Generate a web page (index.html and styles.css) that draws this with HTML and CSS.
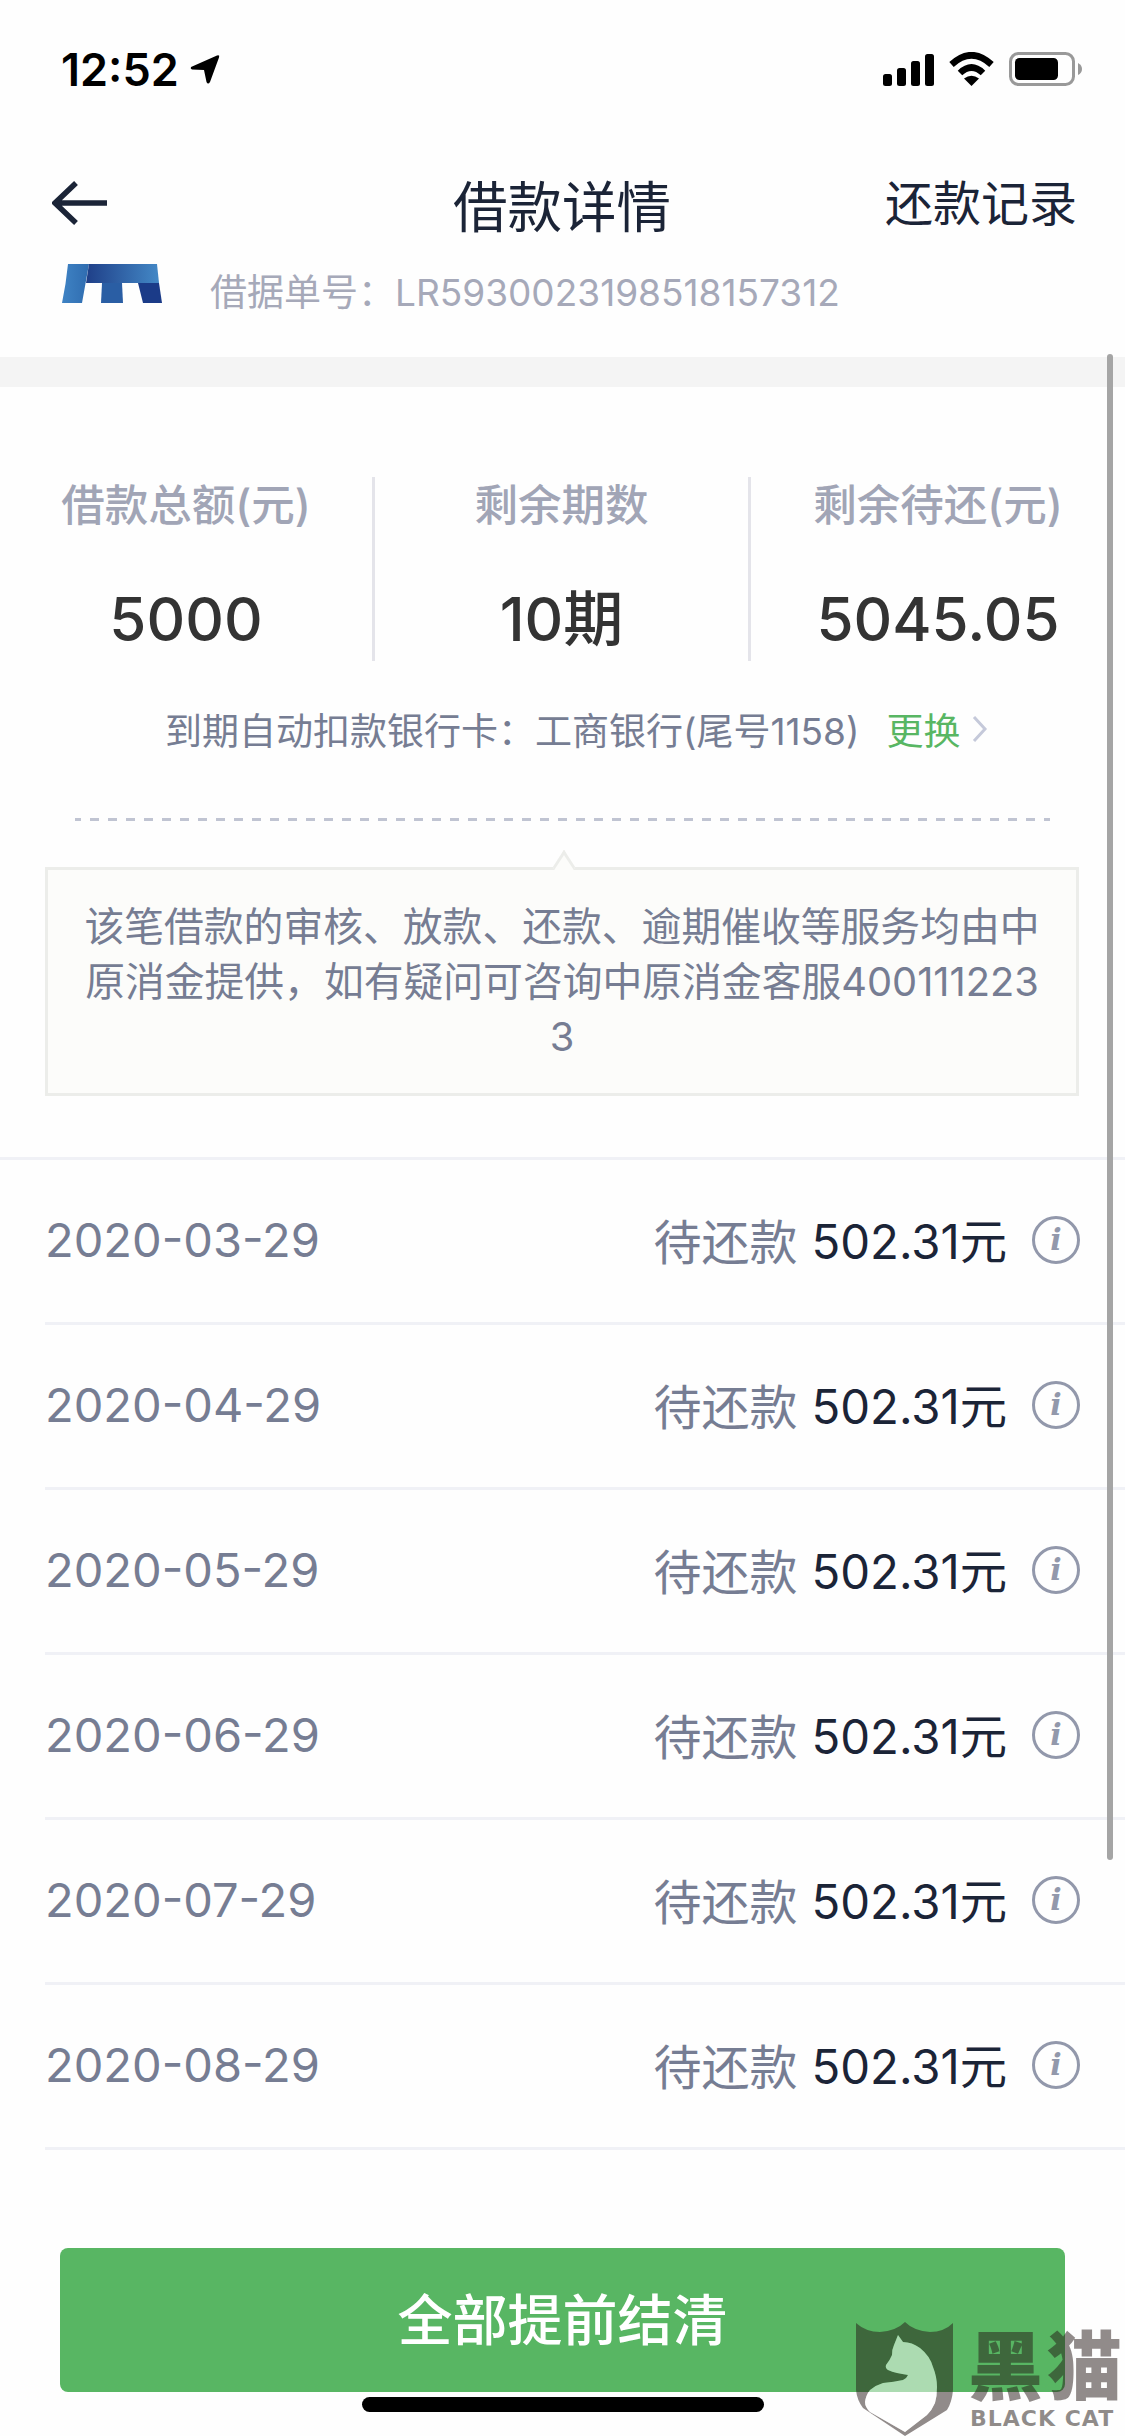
FILE: index.html
```html
<!DOCTYPE html>
<html lang="zh-CN">
<head>
	<meta charset="utf-8" />
	<title>借款详情</title>
	<link rel="stylesheet" href="styles.css">
</head>
<body>
	<div class="page">
		<div class="status-bar">
			<div class="status-time">
				<span>12:52</span>
				<svg class="status-arrow" width="30" height="31" viewBox="0 0 30 31"><path d="M1 13 L27 1.500 Q30 0.500 29 3.500 L20 28 Q18 31 16.500 28 L14 16 L2 15.500 Q0 14.500 1 13Z" fill="#000"/></svg>
			</div>
			<div class="status-icons">
				<svg width="51" height="33" viewBox="0 0 51 33"><rect x="0" y="21" width="9" height="12" rx="2.500"/><rect x="14" y="15" width="9" height="18" rx="2.500"/><rect x="28" y="8" width="9" height="25" rx="2.500"/><rect x="42" y="1" width="9" height="32" rx="2.500"/></svg>
				<svg width="45" height="34" viewBox="0 0 45 34"><path d="M2.500 12.500 Q22.500 -6 42.500 12.500" fill="none" stroke="#000" stroke-width="6.500"/><path d="M11 21 Q22.500 10 34 21" fill="none" stroke="#000" stroke-width="6.500"/><path d="M15 26.500 Q22.500 21 30 26.500 L22.500 34Z" fill="#000"/></svg>
				<svg width="73" height="34" viewBox="0 0 73 34"><rect x="1.500" y="1.500" width="63" height="31" rx="8" fill="none" stroke="#999" stroke-width="3"/><rect x="6" y="6" width="43" height="22" rx="4.500"/><path d="M69 11 Q73 13 73 17 Q73 21 69 23Z" fill="#999"/></svg>
			</div>
		</div>

		<div class="nav">
			<svg class="nav-back" width="56" height="44" viewBox="0 0 56 44"><path d="M55 22 H4 M24 2 L3 22 L24 42" fill="none" stroke="#1b2437" stroke-width="5.500"/></svg>
			<div class="nav-title">借款详情</div>
			<div class="nav-action">还款记录</div>
		</div>

		<div class="order">
			<svg class="order-logo" width="100" height="39" viewBox="0 0 100 39">
				<defs>
					<linearGradient id="logoLeft" x1="0" x2="1" y1="0" y2="0"><stop offset="0" stop-color="#3f83c4"/><stop offset="1" stop-color="#2f6cb0"/></linearGradient>
					<linearGradient id="logoTop" x1="0" x2="1" y1="0" y2="0"><stop offset="0" stop-color="#1f3f88"/><stop offset="1" stop-color="#4388c6"/></linearGradient>
				</defs>
				<path d="M6 0 H27 L20 39 H0Q4 20 6 0Z" fill="url(#logoLeft)"/>
				<path d="M27 0 H95 L97 19 H24 Z" fill="url(#logoTop)"/>
				<path d="M40 19 H60 L61 39 H39Z" fill="#2a5ea4"/>
				<path d="M76 19 H97 L100 39 H81Z" fill="#1b3b88"/>
			</svg>
			<div class="order-no">借据单号：LR5930023198518157312</div>
		</div>

		<div class="band"></div>

		<div class="stats">
			<div class="stat">
				<div class="stat-label">借款总额(元)</div>
				<div class="stat-value">5000</div>
			</div>
			<div class="stat">
				<div class="stat-label">剩余期数</div>
				<div class="stat-value">10期</div>
			</div>
			<div class="stat">
				<div class="stat-label">剩余待还(元)</div>
				<div class="stat-value">5045.05</div>
			</div>
		</div>

		<div class="auto-pay">
			<span>到期自动扣款银行卡：工商银行(尾号1158)</span>
			<span class="auto-change">更换</span>
			<svg width="16" height="30" viewBox="0 0 16 30"><path d="M2 3 L13 15 L2 27" fill="none" stroke="#C5C9DA" stroke-width="3"/></svg>
		</div>

		<div class="dashed"></div>

		<div class="note">
			<div class="note-notch"></div>
			该笔借款的审核、放款、还款、逾期催收等服务均由中原消金提供，如有疑问可咨询中原消金客服4001112233
		</div>

		<div class="rows">
			<div class="row"><div class="row-date">2020-03-29</div><div class="row-status">待还款</div><div class="row-amount">502.31元</div><div class="row-info">i</div></div>
			<div class="row"><div class="row-date">2020-04-29</div><div class="row-status">待还款</div><div class="row-amount">502.31元</div><div class="row-info">i</div></div>
			<div class="row"><div class="row-date">2020-05-29</div><div class="row-status">待还款</div><div class="row-amount">502.31元</div><div class="row-info">i</div></div>
			<div class="row"><div class="row-date">2020-06-29</div><div class="row-status">待还款</div><div class="row-amount">502.31元</div><div class="row-info">i</div></div>
			<div class="row"><div class="row-date">2020-07-29</div><div class="row-status">待还款</div><div class="row-amount">502.31元</div><div class="row-info">i</div></div>
			<div class="row"><div class="row-date">2020-08-29</div><div class="row-status">待还款</div><div class="row-amount">502.31元</div><div class="row-info">i</div></div>
		</div>

		<div class="footer">
			<div class="settle-button">全部提前结清</div>
		</div>

		<div class="scrollbar"></div>
		<div class="home-bar"></div>

		<div class="watermark">
			<svg class="watermark-shield" width="98" height="114" viewBox="0 0 98 114">
				<path fill-rule="evenodd" d="M0 1 Q10 10 24 10 Q40 9 49 0 Q58 9 74 10 Q88 10 97 1 V68 Q96 80 91 88 L49 114 L7 86 Q1 78 0 68Z M42 13 L47 20 Q56 20 64 26 Q74 34 77 45 Q81 55 81 65 Q81 74 79 81 Q76 88 71 93 L49 110 L14 90 Q9 85 9 80 Q10 73 14 68 Q20 63 27 61 Q38 60 47 58 Q51 56 52 53 Q46 52 41 51 Q36 50 32 48 Q29 46 30 43 Q34 38 36 33 Q36 27 38 23Z" fill="#231815" fill-opacity="0.5"/>
				<path d="M42 13 L47 20 Q56 20 64 26 Q74 34 77 45 Q81 55 81 65 Q81 74 79 81 Q76 88 71 93 L49 110 L14 90 Q9 85 9 80 Q10 73 14 68 Q20 63 27 61 Q38 60 47 58 Q51 56 52 53 Q46 52 41 51 Q36 50 32 48 Q29 46 30 43 Q34 38 36 33 Q36 27 38 23Z" fill="#fff" fill-opacity="0.5"/>
			</svg>
			<div class="watermark-text">
				<div class="watermark-cn">黑猫</div>
				<div class="watermark-en">BLACK CAT</div>
			</div>
		</div>
	</div>
</body>
</html>
```

FILE: styles.css
```css
*
{
	box-sizing: border-box;
}

html, body
{
	margin: 0;
	padding: 0;
}

body
{
	background-color: #FEFEFE;
	font-family: "Inter", "Noto Sans CJK SC", sans-serif;
}

.page
{
	position: relative;
	width: 1125px;
	height: 2436px;
	overflow: hidden;
}

/* status bar */
.status-bar
{
	display: flex;
	justify-content: space-between;
	height: 130px;
	padding: 43px 43px 0 61px;
}

.status-time
{
	display: flex;
	align-items: center;
	gap: 11px;
	height: 52px;
	font-size: 45px;
	font-weight: 600;
	color: #000;
}

.status-icons
{
	display: flex;
	align-items: center;
	gap: 15px;
	height: 52px;
}

/* nav */
.nav
{
	display: grid;
	grid-template-columns: 1fr auto 1fr;
	align-items: center;
	height: 130px;
	padding: 0 48px 0 52px;
	color: #1B2437;
}

.nav-title
{
	font-size: 54.500px;
	line-height: 70px;
	margin: 24px 5px 0 0;
}

.nav-action
{
	justify-self: end;
	font-size: 48px;
	line-height: 60px;
	margin-top: 17px;
}

.nav-back
{
	margin-top: 16px;
}

/* loan number */
.order
{
	display: flex;
	align-items: flex-start;
	height: 97px;
	padding: 4px 0 0 62px;
}

.order-no
{
	margin: 6px 0 0 48px;
	font-size: 37px;
	line-height: 46px;
	color: #A6A9B9;
}

.band
{
	height: 30px;
	background-color: #F4F4F4;
}

/* three numbers */
.stats
{
	display: grid;
	grid-template-columns: 375px 376px 374px;
	padding-top: 90px;
}

.stat
{
	height: 184px;
	text-align: center;
	border-right: 3px solid #E4E4EA;
}

.stat:last-child
{
	border-right: none;
}

.stat-label
{
	font-size: 43.500px;
	font-weight: 500;
	line-height: 56px;
	color: #A1A5B6;
}

.stat-value
{
	margin-top: 48px;
	font-size: 60px;
	line-height: 76px;
	font-weight: 500;
	color: #333333;
}

.auto-pay
{
	display: flex;
	align-items: center;
	gap: 12px;
	margin-top: 45px;
	height: 46px;
	padding-left: 165px;
	font-size: 37px;
	color: #767D93;
}

.auto-change
{
	margin-left: 15px;
	color: #58B663;
}

.dashed
{
	height: 3px;
	margin: 66px 75px 0 75px;
	background-image: linear-gradient(90deg, #C0C4D2 9px, transparent 9px);
	background-size: 18px 3px;
	background-position: -3px 0;
}

/* notice */
.note
{
	position: relative;
	margin: 46px 46px 0 45px;
	height: 229px;
	padding: 29px 34px 0 34px;
	font-size: 39.800px;
	line-height: 55px;
	text-align: center;
	word-break: break-all;
	color: #767D93;
	background-color: #FCFCFA;
	border: 3px solid #ECEDEA;
}

.note-notch
{
	position: absolute;
	top: -13px;
	left: 506px;
	width: 20px;
	height: 20px;
	background-color: #FCFCFA;
	border-top: 3px solid #ECEDEA;
	border-left: 3px solid #ECEDEA;
	transform: rotate(45deg) skew(12deg, 12deg);
}

/* plan rows */
.rows
{
	margin-top: 61px;
	border-top: 3px solid #F0F1F6;
}

.row
{
	display: flex;
	align-items: center;
	height: 165px;
	margin-left: 45px;
	padding: 0 45px 5px 0;
	border-bottom: 3px solid #F0F1F6;
}

.row-date
{
	flex: 1;
	margin-top: 2px;
	font-size: 47px;
	color: #767D93;
}

.row-status
{
	font-size: 48px;
	color: #767D93;
}

.row-amount
{
	margin-left: 14px;
	font-size: 47.300px;
	color: #1B2437;
}

.row-info
{
	width: 48px;
	height: 48px;
	margin: 3px 0 0 25px;
	border: 3px solid #9298AB;
	border-radius: 50%;
	font-family: "DejaVu Serif", serif;
	font-size: 30px;
	font-style: italic;
	font-weight: bold;
	line-height: 41px;
	text-align: center;
	color: #9298AB;
}

/* bottom */
.footer
{
	padding: 98px 60px 0 60px;
}

.settle-button
{
	display: flex;
	align-items: center;
	justify-content: center;
	height: 144px;
	padding-bottom: 8px;
	font-size: 55px;
	font-weight: 500;
	color: #FFFFFF;
	background-color: #58B663;
	border-radius: 8px;
}

.scrollbar
{
	position: absolute;
	top: 354px;
	left: 1107px;
	width: 6px;
	height: 1506px;
	border-radius: 3px;
	background-color: #A5A5A5;
}

.home-bar
{
	position: absolute;
	top: 2397px;
	left: 362px;
	width: 402px;
	height: 15px;
	border-radius: 8px;
	background-color: #000;
}

.watermark
{
	position: absolute;
	top: 2322px;
	left: 856px;
	display: flex;
	gap: 16px;
}

.watermark-text
{
	color: rgba(35, 24, 21, 0.5);
}

.watermark-cn
{
	margin: -4px 0 0 -2px;
	font-family: "Noto Sans CJK SC", sans-serif;
	font-size: 75px;
	font-weight: 900;
	letter-spacing: 4px;
	line-height: 88px;
	white-space: nowrap;
}

.watermark-en
{
	font-family: "DejaVu Sans", sans-serif;
	font-size: 22px;
	font-weight: 700;
	letter-spacing: 1px;
	line-height: 26px;
	white-space: nowrap;
}
```
